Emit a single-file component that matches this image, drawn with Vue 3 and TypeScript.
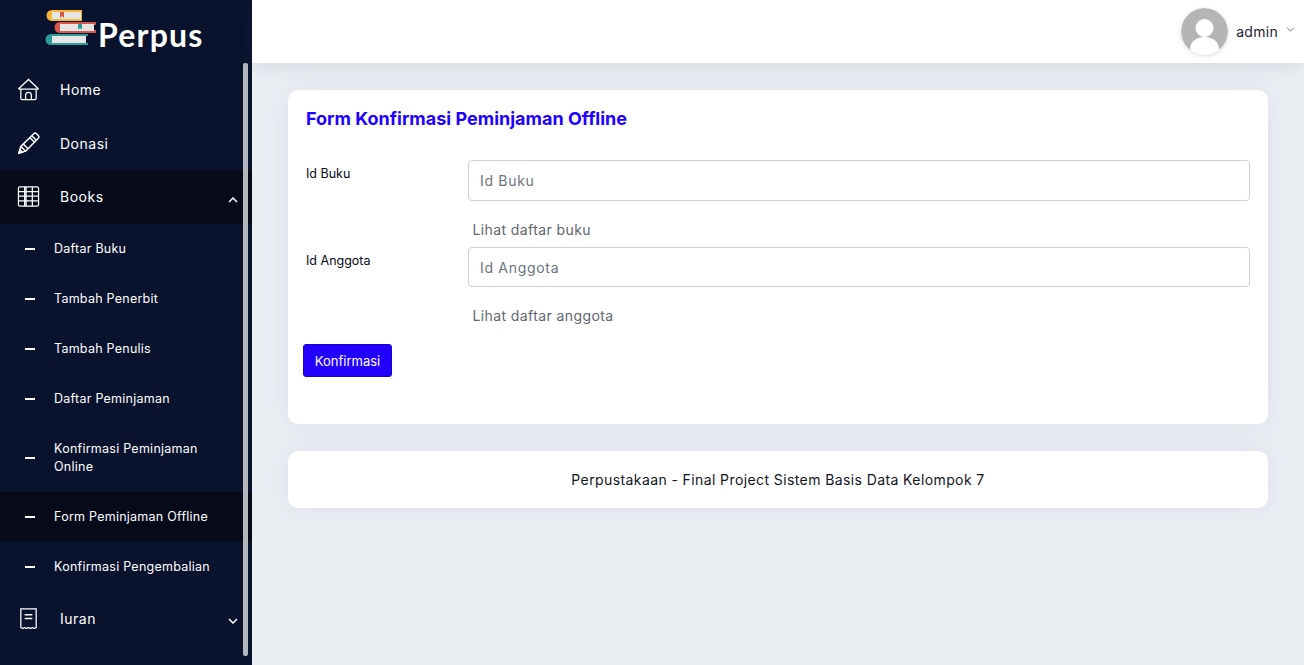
<script setup lang="ts">
const subItems = [
  { label: 'Daftar Buku' },
  { label: 'Tambah Penerbit' },
  { label: 'Tambah Penulis' },
  { label: 'Daftar Peminjaman' },
  { label: 'Konfirmasi Peminjaman Online' },
  { label: 'Form Peminjaman Offline', active: true },
  { label: 'Konfirmasi Pengembalian' },
]
</script>

<template>
  <div class="page">
    <aside class="sidebar">
      <div class="brand">
        <svg class="logo" width="56" height="40" viewBox="0 0 56 40">
          <path d="M8 3h30v11H8a5.500 5.500 0 0 1 0-11z" fill="#f6b73c"/>
          <path d="M8 5h29v7H8z" fill="#e6e6e6"/>
          <path d="M16 15h36v3h-2v5h2v3H16a5.500 5.500 0 0 1 0-11z" fill="#d9574a"/>
          <path d="M16 17h34v7H16z" fill="#e6e6e6"/>
          <path d="M7 27h37v2h-2v7h2v2H7a5.500 5.500 0 0 1 0-11z" fill="#2b9c98"/>
          <path d="M8 29h34v7H8z" fill="#e6e6e6"/>
          <path d="M16 5h4v6l-2-2-2 2z" fill="#d9574a"/>
          <path d="M34 17h4v6l-2-2-2 2z" fill="#2b9c98"/>
        </svg>
        <span class="brand-text">Perpus</span>
      </div>
      <nav class="nav">
        <a class="item">
          <svg class="ico" viewBox="0 0 24 24" fill="none" stroke="#fff" stroke-width="1.300">
            <path d="M1.500 11.500 12 1.500l10.500 10M1.500 11.500h21M4 11.500V21a1.500 1.500 0 0 0 1.500 1.500h13A1.500 1.500 0 0 0 20 21v-9.500M9 22.500V18a3 3 0 0 1 6 0v4.500"/>
          </svg>
          <span>Home</span>
        </a>
        <a class="item">
          <svg class="ico" viewBox="0 0 24 24" fill="none" stroke="#fff" stroke-width="1.500">
            <path d="M2 22l2-7L17.500 1.800a2 2 0 0 1 2.800 0l1.900 1.900a2 2 0 0 1 0 2.800L9 20z" stroke-linejoin="round"/>
            <path d="M15.500 4l4.500 4.500M4 15l5 5M6.500 12.500 11.500 17.500M13.500 6l4.500 4.500"/>
            <path d="M2 22l1-3.500 2.500 2.500z" fill="#fff"/>
          </svg>
          <span>Donasi</span>
        </a>
        <a class="item active">
          <svg class="ico" viewBox="0 0 24 24" fill="none" stroke="#fff" stroke-width="1.300">
            <rect x="1.500" y="2" width="21" height="20" rx="1.500"/>
            <path d="M1.500 7h21M1.500 11.500h21M1.500 16.500h21M8 2v20M16 2v20M9.500 2v20"/>
          </svg>
          <span>Books</span>
          <svg class="chev" viewBox="0 0 10 6" fill="none" stroke="#fff" stroke-width="1.500"><path d="M1 5l4-4 4 4"/></svg>
        </a>
        <ul class="sub">
          <li v-for="s in subItems" :key="s.label" :class="{ active: s.active }">
            <i class="dash"></i>
            <span>{{ s.label }}</span>
          </li>
        </ul>
        <a class="item">
          <svg class="ico" viewBox="0 0 24 24" fill="none" stroke="#fff" stroke-width="1.300">
            <path d="M4 2h16v19.500c-1.300 1-2.700 1-4 0-1.300 1-2.700 1-4 0-1.300 1-2.700 1-4 0-1.300 1-2.700 1-4 0z"/>
            <path d="M8 8h8M8 12h8" stroke-width="1.600"/>
          </svg>
          <span>Iuran</span>
          <svg class="chev" viewBox="0 0 10 6" fill="none" stroke="#fff" stroke-width="1.500"><path d="M1 1l4 4 4-4"/></svg>
        </a>
      </nav>
      <div class="thumb"></div>
    </aside>

    <div class="main">
      <header class="topbar">
        <div class="avatar">
          <svg viewBox="0 0 47 47" width="47" height="47">
            <circle cx="23.500" cy="23.500" r="23.500" fill="#b5b5b5"/>
            <circle cx="23.500" cy="20" r="9" fill="#fff"/>
            <path d="M9 47V42c0-8 6-13 14.500-13S38 34 38 42v5z" fill="#fff"/>
          </svg>
        </div>
        <span class="user">admin</span>
        <svg class="user-chev" viewBox="0 0 10 6" fill="none" stroke="#555" stroke-width="1"><path d="M1 1l4 4 4-4"/></svg>
      </header>

      <main class="content">
        <section class="card form-card">
          <h1>Form Konfirmasi Peminjaman Offline</h1>
          <div class="row">
            <label>Id Buku</label>
            <div class="field">
              <input placeholder="Id Buku" />
              <p>Lihat daftar buku</p>
            </div>
          </div>
          <div class="row second">
            <label>Id Anggota</label>
            <div class="field">
              <input placeholder="Id Anggota" />
              <p>Lihat daftar anggota</p>
            </div>
          </div>
          <button type="button">Konfirmasi</button>
        </section>
        <footer class="card foot">Perpustakaan - Final Project Sistem Basis Data Kelompok 7</footer>
      </main>
    </div>
  </div>
</template>

<style>
html, body { margin: 0; height: 100%; overflow: hidden; }
</style>

<style scoped>
.page {
  display: flex;
  height: 665px;
  width: 1304px;
  overflow: hidden;
  font-family: Inter, "Liberation Sans", sans-serif;
  background: #ebeef3;
}
.sidebar {
  position: relative;
  width: 252px;
  flex: none;
  background: #0a132d;
  color: #fff;
  overflow: hidden;
}
.brand {
  height: 63px;
  display: flex;
  align-items: flex-start;
  box-sizing: border-box;
  padding: 7px 0 0 44px;
}
.logo { flex: none; margin-right: -2px; }
.brand-text {
  font-family: Lato, sans-serif;
  font-weight: 700;
  font-size: 32px;
  letter-spacing: 1.200px;
  line-height: 40px;
  margin-top: 8px;
}
.item {
  display: flex;
  align-items: center;
  height: 53.500px;
  padding-left: 17px;
  font-size: 14px;
  letter-spacing: 0.500px;
  position: relative;
}
.item.active { background: #060a19; }
.ico { width: 23px; height: 23px; flex: none; margin-right: 20px; }
.chev { position: absolute; left: 228px; top: 50%; width: 10px; height: 6px; margin-top: 0; }
.sub { list-style: none; margin: 0; padding: 0; }
.sub li {
  display: flex;
  align-items: center;
  padding: 16px 36px 16px 25px;
  font-size: 12.500px;
  line-height: 18px;
  letter-spacing: 0.250px;
}
.sub li.active { background: #060a19; }
.dash {
  width: 10px;
  height: 2px;
  background: #fff;
  flex: none;
  margin-right: 19px;
}
.thumb {
  position: absolute;
  left: 243px;
  top: 63px;
  width: 5px;
  height: 593px;
  background: #b3b6bd;
  border-radius: 2px;
}
.main { flex: 1; min-width: 0; display: flex; flex-direction: column; }
.topbar {
  height: 63px;
  background: #fff;
  display: flex;
  align-items: center;
  box-sizing: border-box;
  padding: 0 9px 0 0;
  justify-content: flex-end;
  box-shadow: 0 4px 16px rgba(70, 80, 100, 0.12);
  position: relative;
}
.avatar { width: 47px; height: 47px; margin-right: 8px; border-radius: 50%; overflow: hidden; box-shadow: 0 1px 4px rgba(0,0,0,.15); }
.avatar svg { display: block; }
.user { font-size: 14px; letter-spacing: 0.300px; color: #1a2233; margin-right: 8px; }
.user-chev { width: 9px; height: 5px; margin-bottom: 4px; }
.content {
  padding: 27px 36px 0;
  display: flex;
  flex-direction: column;
  gap: 27px;
}
.card {
  background: #fff;
  border-radius: 10px;
  box-shadow: 0 0 28px rgba(80, 90, 110, 0.09);
}
.form-card {
  height: 334px;
  box-sizing: border-box;
  padding: 18px 18px 0;
  position: relative;
}
h1 {
  margin: 0;
  font-size: 18px;
  line-height: 22px;
  font-weight: 700;
  color: #2200ff;
}
.row {
  display: flex;
  margin-top: 30px;
}
.row.second { margin-top: 8px; }
.row label {
  width: 162px;
  flex: none;
  font-size: 12.500px;
  line-height: 18px;
  padding-top: 5px;
  color: #050a14;
}
.field { flex: 1; }
input {
  display: block;
  width: 100%;
  box-sizing: border-box;
  height: 41px;
  border: 1px solid #ccd0d6;
  border-radius: 4px;
  padding: 0 11px;
  font: inherit;
  font-size: 14px;
  letter-spacing: 0.700px;
  background: #fff;
  outline: none;
}
.row.second input { height: 40px; }
input::placeholder { color: #6c757d; opacity: 1; }
.field p {
  margin: 20px 0 0 4.500px;
  font-size: 14px;
  line-height: 18px;
  letter-spacing: 0.400px;
  color: #5f6670;
}
button {
  display: block;
  margin: 19px 0 0 -3px;
  width: 89px;
  height: 33px;
  background: #2200ff;
  color: #fff;
  border: 1px solid #1a00cc;
  border-radius: 3px;
  font: inherit;
  font-size: 13px;
  padding: 0;
}
.foot {
  height: 57px;
  display: flex;
  align-items: center;
  justify-content: center;
  font-size: 14px;
  letter-spacing: 0.400px;
  color: #10151f;
}
</style>
